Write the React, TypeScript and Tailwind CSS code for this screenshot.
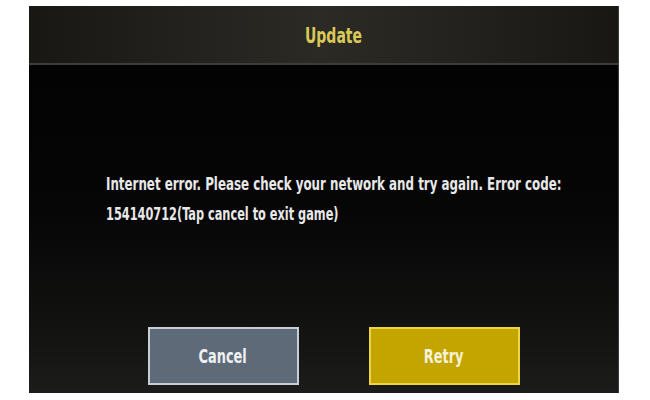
import React from "react";

const font = "font-['Liberation_Sans_Narrow','DejaVu_Sans_Condensed',sans-serif]";

export default function App() {
  return (
    <div className="w-[650px] h-[400px] bg-white flex items-start pl-[29px] pt-[6px]">
      <div className={`w-[590px] h-[387px] flex flex-col bg-[#050505] border-r border-[#3a3a38] ${font}`}>
        {/* title bar */}
        <div className="h-[59px] flex items-center justify-center bg-[linear-gradient(90deg,#181714_0%,#23211d_25%,#2c2a25_50%,#23211d_75%,#181714_100%)] border-b-[2px] border-[#3f3d38]">
          <span className="inline-block text-[21px] font-bold text-[#d9c85a] scale-x-[0.74] ml-[20px] mt-[4px]">Update</span>
        </div>

        {/* message + actions */}
        <div className="flex-1 flex flex-col bg-[linear-gradient(180deg,#030303_0%,#060606_45%,#141413_85%,#1c1c1b_100%)]">
          <div className="pl-[77px] pt-[104px] text-[#e8e8e8] text-[18px] font-bold leading-[30px] whitespace-nowrap">
            <p className="origin-left scale-x-[0.732]">Internet error. Please check your network and try again. Error code:</p>
            <p className="origin-left scale-x-[0.7]">154140712(Tap cancel to exit game)</p>
          </div>

          <div className="mt-auto mb-[8px] flex justify-center gap-[70px] pl-[20px]">
            <button className="w-[151px] h-[58px] bg-[#5e6a78] border-[2px] border-[#c9ced6] text-[#eef0f2] text-[20px] font-bold">
              <span className="inline-block scale-x-[0.72]">Cancel</span>
            </button>
            <button className="w-[151px] h-[58px] bg-[#c4a500] border-[2px] border-[#ecd445] text-[#f7f1d8] text-[20px] font-bold">
              <span className="inline-block scale-x-[0.72]">Retry</span>
            </button>
          </div>
        </div>
      </div>
    </div>
  );
}
